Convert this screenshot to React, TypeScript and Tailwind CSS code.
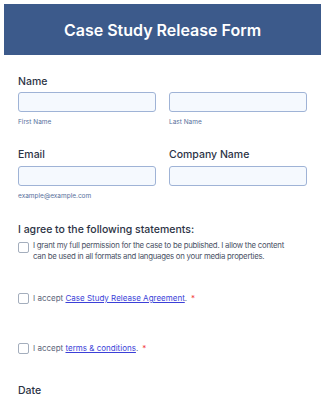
import React from "react";

function Input() {
  return <div className="h-[20px] rounded-[3px] border border-[#9fb3d6] bg-[#f5f9fe]" />;
}

function Box() {
  return <div className="w-[11px] h-[11px] shrink-0 rounded-[2px] border border-[#a4aebd] bg-white" />;
}

export default function App() {
  return (
    <div className="w-[325px] h-[400px] bg-white overflow-hidden" style={{ fontFamily: "Inter, 'Noto Sans', sans-serif" }}>
      <div className="mx-[4px] mt-[4px] h-[51px] bg-[#3c5a8b] flex items-center justify-center">
        <h1 className="text-white text-[16px] font-semibold">Case Study Release Form</h1>
      </div>
      <div className="px-[18px] pt-[20px]">
        <div className="grid grid-cols-2 gap-x-[13px]">
          <div className="flex flex-col">
            <div className="h-[14px] text-[10.5px] leading-[14px] font-medium text-[#2c3345]">Name</div>
            <div className="mt-[3px]"><Input /></div>
            <div className="mt-[5px] h-[10px] text-[6.5px] leading-[10px] text-[#57709c]">First Name</div>
          </div>
          <div className="flex flex-col">
            <div className="h-[14px]" />
            <div className="mt-[3px]"><Input /></div>
            <div className="mt-[5px] h-[10px] text-[6.5px] leading-[10px] text-[#57709c]">Last Name</div>
          </div>
        </div>
        <div className="grid grid-cols-2 gap-x-[13px] mt-[21px]">
          <div className="flex flex-col">
            <div className="h-[14px] text-[10.5px] leading-[14px] font-medium text-[#2c3345]">Email</div>
            <div className="mt-[4px]"><Input /></div>
            <div className="mt-[5px] h-[10px] text-[6.5px] leading-[10px] text-[#57709c]">example@example.com</div>
          </div>
          <div className="flex flex-col">
            <div className="h-[14px] text-[10.5px] leading-[14px] font-medium text-[#2c3345]">Company Name</div>
            <div className="mt-[4px]"><Input /></div>
          </div>
        </div>
        <div className="mt-[22px] h-[14px] text-[10.5px] leading-[14px] font-medium text-[#2c3345]">I agree to the following statements:</div>
        <div className="mt-[3px] flex gap-[4px] items-start">
          <div className="mt-[2px]"><Box /></div>
          <p className="max-w-[257px] text-[7.8px] leading-[10.5px] tracking-[-0.25px] text-[#4b5266]">
            I grant my full permission for the case to be published. I allow the content can be used in all formats and languages on your media properties.
          </p>
        </div>
        <div className="mt-[32px] flex gap-[4px] items-center">
          <Box />
          <span className="text-[8px] leading-[11px] text-[#5c6478]">
            I accept <a className="text-[#3b3fd8] underline" href="#">Case Study Release Agreement</a>.
            <span className="text-[#f23a3c] ml-[4px]">*</span>
          </span>
        </div>
        <div className="mt-[39px] flex gap-[4px] items-center">
          <Box />
          <span className="text-[8px] leading-[11px] text-[#5c6478]">
            I accept <a className="text-[#3b3fd8] underline" href="#">terms &amp; conditions</a>.
            <span className="text-[#f23a3c] ml-[4px]">*</span>
          </span>
        </div>
        <div className="mt-[30px] h-[14px] text-[10.5px] leading-[14px] font-medium text-[#2c3345]">Date</div>
      </div>
    </div>
  );
}
